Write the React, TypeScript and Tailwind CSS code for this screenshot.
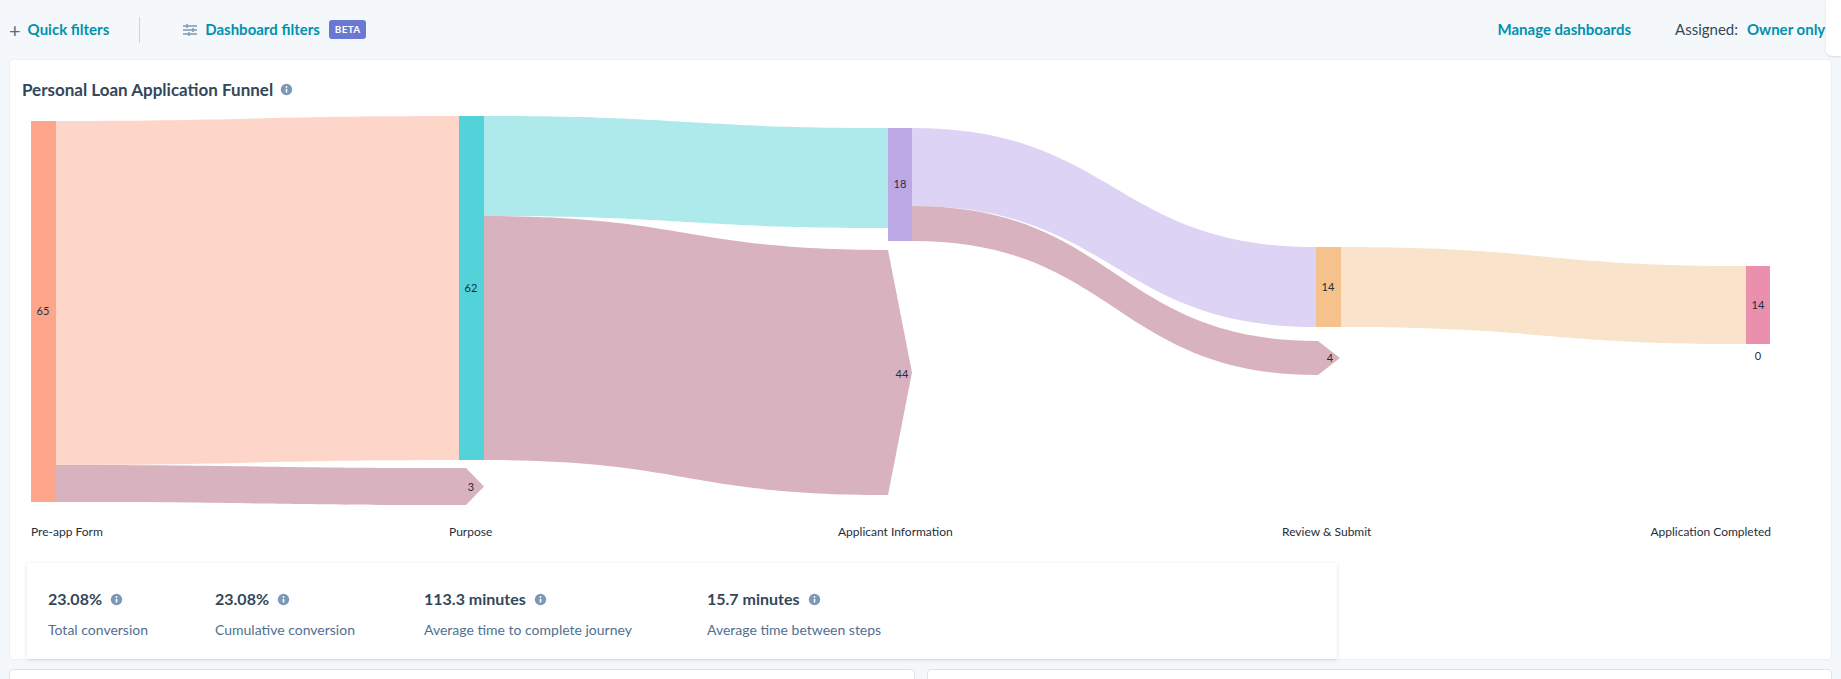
import React from "react";

function band(x0: number, a0: number, b0: number, x1: number, a1: number, b1: number, tip?: number) {
  const m = (x0 + x1) / 2;
  const end = tip ? `L ${x1 + tip} ${(a1 + b1) / 2} ` : "";
  return `M ${x0} ${a0} C ${m} ${a0}, ${m} ${a1}, ${x1} ${a1} ${end}L ${x1} ${b1} C ${m} ${b1}, ${m} ${b0}, ${x0} ${b0} Z`;
}

const Info = () => (
  <svg width="13" height="13" viewBox="0 0 16 16" className="inline-block">
    <circle cx="8" cy="8" r="7" fill="#7c98b6" />
    <rect x="7" y="7" width="2" height="5" rx="1" fill="#fff" />
    <circle cx="8" cy="4.8" r="1.1" fill="#fff" />
  </svg>
);

const drop = "#d8b3bf";

function Sankey() {
  const t = { fontSize: 11, fontFamily: "Lato, sans-serif", fill: "#1f2d3d" } as const;
  const lab = { fontSize: 12, fontFamily: "Lato, sans-serif", fill: "#1f2d3d" } as const;
  return (
    <svg width="1823" height="440" viewBox="9 95 1823 440" className="block">
      <path d={band(56, 109, 453, 459, 104, 448)} fill="#fdd5c9" />
      <path d={band(56, 453, 490, 466, 456, 493, 18)} fill={drop} />
      <path d={band(484, 104, 204, 888, 116, 216)} fill="#aee9ec" />
      <path d={band(484, 204, 448, 888, 238, 483, 24)} fill={drop} />
      <path d={band(912, 116, 194, 1316, 235, 315)} fill="#ddd4f5" />
      <path d={band(912, 194, 229, 1318, 329, 363, 22)} fill={drop} />
      <path d={band(1341, 235, 315, 1746, 254, 332)} fill="#fae3cb" />
      <rect x="31" y="109" width="25" height="381" fill="#fda68c" />
      <rect x="459" y="104" width="25" height="344" fill="#51d3d9" />
      <rect x="888" y="116" width="24" height="113" fill="#bda8e6" />
      <rect x="1316" y="235" width="25" height="80" fill="#f5c28b" />
      <rect x="1746" y="254" width="24" height="78" fill="#ea90ad" />
      <text x="43" y="303" textAnchor="middle" {...t}>65</text>
      <text x="471" y="280" textAnchor="middle" {...t}>62</text>
      <text x="900" y="176" textAnchor="middle" {...t}>18</text>
      <text x="1328" y="279" textAnchor="middle" {...t}>14</text>
      <text x="1758" y="297" textAnchor="middle" {...t}>14</text>
      <text x="1758" y="348" textAnchor="middle" {...t}>0</text>
      <text x="471" y="479" textAnchor="middle" {...t}>3</text>
      <text x="902" y="366" textAnchor="middle" {...t}>44</text>
      <text x="1330" y="350" textAnchor="middle" {...t}>4</text>
      <text x="31" y="524" {...lab}>Pre-app Form</text>
      <text x="449" y="524" {...lab}>Purpose</text>
      <text x="838" y="524" {...lab}>Applicant Information</text>
      <text x="1282" y="524" {...lab}>Review &amp; Submit</text>
      <text x="1771" y="524" textAnchor="end" {...lab}>Application Completed</text>
    </svg>
  );
}

const stats = [
  ["23.08%", "Total conversion", "w-[167px]"],
  ["23.08%", "Cumulative conversion", "w-[209px]"],
  ["113.3 minutes", "Average time to complete journey", "w-[283px]"],
  ["15.7 minutes", "Average time between steps", "w-[260px]"],
];

export default function App() {
  return (
    <div className="w-[1841px] h-[679px] overflow-hidden bg-[#f5f8fa] relative" style={{ fontFamily: "Lato, 'Open Sans', sans-serif" }}>
      <div className="h-[59px] flex items-center text-[15px] pr-[15px]">
        <div className="flex items-center gap-[7px] pl-[9px] text-[#0091ae] font-bold">
          <span className="text-[20px] font-normal text-[#516f90] leading-none">+</span>Quick filters
        </div>
        <div className="w-px h-[26px] bg-[#cbd6e2] ml-[30px] mr-[43px]" />
        <div className="flex items-center gap-[8px] text-[#0091ae] font-bold">
          <svg width="14" height="12" viewBox="0 0 14 12" stroke="#7c98b6" strokeWidth="1.4">
            <path d="M0 2h14M0 6h14M0 10h14" /><path d="M4 0v4M10 4v4M6 8v4" />
          </svg>
          Dashboard filters
          <span className="ml-[1px] bg-[#6a78d1] text-white text-[10px] rounded-[3px] px-[6px] py-[2px] tracking-wide">BETA</span>
        </div>
        <div className="flex-1" />
        <span className="text-[#0091ae] font-bold">Manage dashboards</span>
        <span className="ml-[44px] text-[#33475b]">Assigned:</span>
        <span className="ml-[9px] w-[79px] overflow-hidden whitespace-nowrap text-[#0091ae] font-bold">Owner only</span>
      </div>
      <div className="absolute right-0 top-0 w-[15px] h-[56px] bg-white rounded-bl-[6px] shadow" />
      <div className="mx-[9px] bg-white rounded-[4px] h-[601px] border border-[#eaf0f6]">
        <div className="pt-[17px] pl-[12px] flex items-center gap-[7px] text-[17px] font-bold text-[#33475b]">
          Personal Loan Application Funnel <Info />
        </div>
        <div className="mt-[4px] -ml-px"><Sankey /></div>
        <div className="ml-[17px] mt-[16px] w-[1310px] h-[96px] shadow-[0_1px_4px_rgba(0,0,0,0.12)] flex items-center pl-[21px] pt-[6px]">
          {stats.map(([v, l, w]) => (
            <div key={l} className={w}>
              <div className="flex items-center gap-[8px] text-[16px] font-bold text-[#33475b]">{v} <Info /></div>
              <div className="mt-[8px] text-[14px] text-[#516f90]">{l}</div>
            </div>
          ))}
        </div>
      </div>
      <div className="flex gap-[12px] mx-[9px] mt-[9px]">
        <div className="w-[906px] h-[20px] bg-white border border-[#dfe3eb] rounded-[4px]" />
        <div className="flex-1 h-[20px] bg-white border border-[#dfe3eb] rounded-[4px]" />
      </div>
    </div>
  );
}
